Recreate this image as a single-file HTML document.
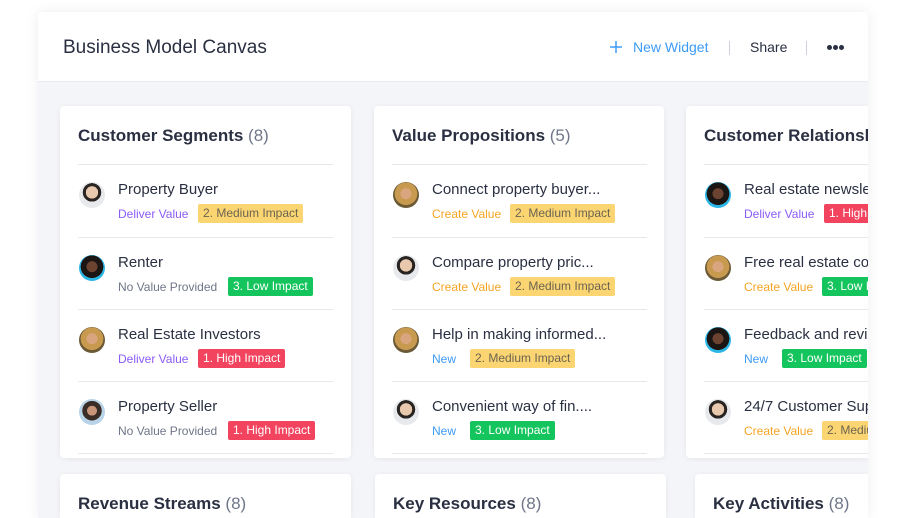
<!DOCTYPE html>
<html><head><meta charset="utf-8"><style>
*{margin:0;padding:0;box-sizing:border-box}
html,body{width:906px;height:518px;overflow:hidden}
body{background:#fff;position:relative;font-family:"Liberation Sans",sans-serif;color:#2a3042}
.frame{position:absolute;left:38px;top:12px;width:830px;height:506px;background:#f4f5f8;overflow:hidden;box-shadow:0 0 14px rgba(0,0,0,.07);border-radius:3px 3px 0 0}
.hdr{position:absolute;left:0;top:0;width:830px;height:70px;background:#fff;border-bottom:1px solid #e9ebf0}
.title{position:absolute;left:25px;top:25px;font-size:19px;color:#2a3042}
.nw{position:absolute;top:27px;font-size:14px;color:#3d9bf5}
.sh{position:absolute;left:712px;top:27px;font-size:14px;color:#2a3042}
.sep{position:absolute;top:29px;width:1px;height:14px;background:#cdd1db}
.dot{position:absolute;top:33px;width:5px;height:5px;border-radius:50%;background:#2a3042}
.card{position:absolute;background:#fff;border-radius:4px;box-shadow:0 1px 6px rgba(0,0,0,.06);overflow:hidden}
.card h2{position:absolute;left:18px;top:20px;font-size:17px;font-weight:bold;color:#2a3042;white-space:nowrap}
.card h2 span{font-weight:normal;color:#6f7688}
.dv{position:absolute;left:18px;width:255px;height:1px;background:#e6e8ee}
.it{position:absolute;left:18px;width:300px;height:72px}
.av{position:absolute;left:1px;top:15px;width:26px;height:26px;border-radius:50%}
.nm{position:absolute;left:40px;top:14px;font-size:15px;color:#2a3042;white-space:nowrap}
.st{position:absolute;left:40px;top:40px;font-size:12px;white-space:nowrap}
.tg{position:absolute;top:37px;height:19px;line-height:19px;padding:0 5px;font-size:12px;border-radius:2px;white-space:nowrap}
.m{background:#fcd573;color:#6b6450}.l{background:#14c45c;color:#fff}.h{background:#f2445e;color:#fff}
.pu{color:#8b5cf6}.gr{color:#6f7688}.or{color:#f5a524}.bl{color:#3d9bf5}
.a1{background:radial-gradient(circle at 50% 40%,#e9c9ae 0 30%,#2a2522 31% 45%,#e7e9ec 46%)}
.a2{background:radial-gradient(circle at 50% 45%,#6b4330 0 28%,#1b1513 29% 58%,#2cb6e6 59%)}
.a3{background:radial-gradient(circle at 50% 45%,#d9a57f 0 28%,#c89a50 29% 58%,#6b5a35 59%)}
.a4{background:radial-gradient(circle at 50% 45%,#c9957a 0 25%,#3a2c26 26% 50%,#b9d3e8 51%)}
</style></head><body>
<div class="frame">
<div class="hdr">
<div class="title">Business Model Canvas</div>
<svg style="position:absolute;left:571px;top:28px" width="14" height="14"><path d="M7 1v12M1 7h12" stroke="#3d9bf5" stroke-width="1.5"/></svg>
<div class="nw" style="left:595px">New Widget</div>
<div class="sep" style="left:691px"></div>
<div class="sh">Share</div>
<div class="sep" style="left:768px"></div>
<div class="dot" style="left:789px"></div><div class="dot" style="left:795px"></div><div class="dot" style="left:801px"></div>
</div>

<div class="card" style="left:22px;top:94px;width:291px;height:352px">
<h2>Customer Segments <span>(8)</span></h2>
<div class="dv" style="top:58px"></div>
<div class="it" style="top:61px"><div class="av a1"></div><div class="nm">Property Buyer</div><div class="st pu">Deliver Value</div><div class="tg m" style="left:120px">2. Medium Impact</div></div>
<div class="dv" style="top:131px"></div>
<div class="it" style="top:134px"><div class="av a2"></div><div class="nm">Renter</div><div class="st gr">No Value Provided</div><div class="tg l" style="left:150px">3. Low Impact</div></div>
<div class="dv" style="top:203px"></div>
<div class="it" style="top:206px"><div class="av a3"></div><div class="nm">Real Estate Investors</div><div class="st pu">Deliver Value</div><div class="tg h" style="left:120px">1. High Impact</div></div>
<div class="dv" style="top:275px"></div>
<div class="it" style="top:278px"><div class="av a4"></div><div class="nm">Property Seller</div><div class="st gr">No Value Provided</div><div class="tg h" style="left:150px">1. High Impact</div></div>
<div class="dv" style="top:347px"></div>
</div>

<div class="card" style="left:336px;top:94px;width:290px;height:352px">
<h2>Value Propositions <span>(5)</span></h2>
<div class="dv" style="top:58px"></div>
<div class="it" style="top:61px"><div class="av a3"></div><div class="nm">Connect property buyer...</div><div class="st or">Create Value</div><div class="tg m" style="left:118px">2. Medium Impact</div></div>
<div class="dv" style="top:131px"></div>
<div class="it" style="top:134px"><div class="av a1"></div><div class="nm">Compare property pric...</div><div class="st or">Create Value</div><div class="tg m" style="left:118px">2. Medium Impact</div></div>
<div class="dv" style="top:203px"></div>
<div class="it" style="top:206px"><div class="av a3"></div><div class="nm">Help in making informed...</div><div class="st bl">New</div><div class="tg m" style="left:78px">2. Medium Impact</div></div>
<div class="dv" style="top:275px"></div>
<div class="it" style="top:278px"><div class="av a1"></div><div class="nm">Convenient way of fin....</div><div class="st bl">New</div><div class="tg l" style="left:78px">3. Low Impact</div></div>
<div class="dv" style="top:347px"></div>
</div>

<div class="card" style="left:648px;top:94px;width:182px;height:352px;border-radius:4px 0 0 4px">
<h2>Customer Relationships <span>(8)</span></h2>
<div class="dv" style="top:58px;width:270px"></div>
<div class="it" style="top:61px"><div class="av a2"></div><div class="nm">Real estate newsletter</div><div class="st pu">Deliver Value</div><div class="tg h" style="left:120px">1. High Impact</div></div>
<div class="dv" style="top:131px;width:270px"></div>
<div class="it" style="top:134px"><div class="av a3"></div><div class="nm">Free real estate consultation</div><div class="st or">Create Value</div><div class="tg l" style="left:118px">3. Low Impact</div></div>
<div class="dv" style="top:203px;width:270px"></div>
<div class="it" style="top:206px"><div class="av a2"></div><div class="nm">Feedback and reviews</div><div class="st bl">New</div><div class="tg l" style="left:78px">3. Low Impact</div></div>
<div class="dv" style="top:275px;width:270px"></div>
<div class="it" style="top:278px"><div class="av a1"></div><div class="nm">24/7 Customer Support</div><div class="st or">Create Value</div><div class="tg m" style="left:118px">2. Medium Impact</div></div>
<div class="dv" style="top:347px;width:270px"></div>
</div>

<div class="card" style="left:22px;top:462px;width:291px;height:44px;border-radius:4px 4px 0 0"><h2>Revenue Streams <span>(8)</span></h2></div>
<div class="card" style="left:337px;top:462px;width:291px;height:44px;border-radius:4px 4px 0 0"><h2>Key Resources <span>(8)</span></h2></div>
<div class="card" style="left:657px;top:462px;width:173px;height:44px;border-radius:4px 0 0 0"><h2>Key Activities <span>(8)</span></h2></div>
</div>
</body></html>
